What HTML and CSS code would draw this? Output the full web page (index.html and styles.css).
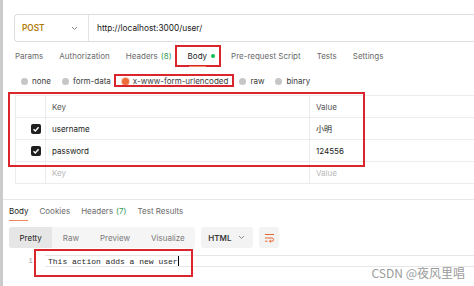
FILE: index.html
```html
<!DOCTYPE html>
<html lang="zh">
<head>
  <meta charset="UTF-8">
  <title>POST /user/</title>
  <link rel="stylesheet" href="styles.css">
</head>
<body>
  <div class="app">
    <div class="request">
      <div class="method">
        <span>POST</span>
        <svg width="7" height="5" viewBox="0 0 7 5"><path d="M1 1l2.5 2.5L6 1" fill="none" stroke="#8a8a8a" stroke-width="1"/></svg>
      </div>
      <div class="url">http://localhost:3000/user/</div>
    </div>

    <nav class="tabs req-tabs">
      <span class="tab">Params</span>
      <span class="tab">Authorization</span>
      <span class="tab">Headers <em>(8)</em></span>
      <span class="tab active mark-body">Body<i class="dot"></i></span>
      <span class="tab">Pre-request Script</span>
      <span class="tab">Tests</span>
      <span class="tab">Settings</span>
    </nav>

    <div class="body-types">
      <label class="radio"><i></i>none</label>
      <label class="radio"><i></i>form-data</label>
      <label class="radio checked mark-type"><i></i>x-www-form-urlencoded</label>
      <label class="radio"><i></i>raw</label>
      <label class="radio"><i></i>binary</label>
    </div>

    <div class="params-wrap">
      <table class="params">
        <tr class="head">
          <td class="check"></td>
          <td class="key">Key</td>
          <td>Value</td>
        </tr>
        <tr>
          <td class="check"><span class="box"><svg width="8" height="8" viewBox="0 0 8 8"><path d="M1.5 4.2l1.8 1.7L6.6 2.2" fill="none" stroke="#fff" stroke-width="1.4"/></svg></span></td>
          <td class="key">username</td>
          <td>小明</td>
        </tr>
        <tr>
          <td class="check"><span class="box"><svg width="8" height="8" viewBox="0 0 8 8"><path d="M1.5 4.2l1.8 1.7L6.6 2.2" fill="none" stroke="#fff" stroke-width="1.4"/></svg></span></td>
          <td class="key">password</td>
          <td>124556</td>
        </tr>
        <tr class="empty">
          <td class="check"></td>
          <td class="key">Key</td>
          <td>Value</td>
        </tr>
      </table>
      <div class="mark mark-table"></div>
    </div>

    <section class="response">
      <nav class="tabs res-tabs">
        <span class="tab active">Body</span>
        <span class="tab">Cookies</span>
        <span class="tab">Headers <em>(7)</em></span>
        <span class="tab">Test Results</span>
      </nav>

      <div class="toolbar">
        <div class="views">
          <span class="view active">Pretty</span>
          <span class="view">Raw</span>
          <span class="view">Preview</span>
          <span class="view">Visualize</span>
        </div>
        <div class="format">
          <span>HTML</span>
          <svg width="7" height="5" viewBox="0 0 7 5"><path d="M1 1l2.5 2.5L6 1" fill="none" stroke="#8a8a8a" stroke-width="1"/></svg>
        </div>
        <div class="wrap-btn">
          <svg width="11" height="10" viewBox="0 0 11 10"><path d="M1 1.5h9M1 5h7a1.6 1.6 0 0 1 0 3.2H5.5M6.8 7l-1.3 1.2 1.3 1.2M1 8.2h2.5" fill="none" stroke="#e8692e" stroke-width="1"/></svg>
        </div>
      </div>

      <div class="editor">
        <span class="ln">1</span>
        <div class="code-line"><code>This action adds a new user</code><span class="caret"></span></div>
        <div class="mark mark-code"></div>
      </div>
    </section>

    <div class="watermark">CSDN @夜风里唱</div>
  </div>
</body>
</html>
```

FILE: styles.css
```css
* {
  box-sizing: border-box;
}

body {
  margin: 0;
  background: #fff;
  font-family: Inter, "Noto Sans CJK SC", sans-serif;
  font-size: 8px;
  color: #212121;
  overflow: hidden;
}

.app {
  position: relative;
  height: 286px;
  border-left: 3px solid #cbcbcb;
  padding-top: 14px;
  overflow: hidden;
}

/* request bar */
.request {
  display: flex;
  align-items: center;
  height: 28px;
  margin-left: 11px;
  border: 1px solid #dedede;
  border-right: none;
  border-radius: 4px 0 0 4px;
}

.method {
  display: flex;
  align-items: center;
  justify-content: space-between;
  width: 74px;
  height: 100%;
  padding: 0 10px 0 7px;
  border-right: 1px solid #e4e4e4;
  color: #b07c0a;
  font-weight: 600;
  font-size: 8.3px;
}

.url {
  padding-left: 8px;
  font-size: 8.3px;
  color: #212121;
}

/* tabs */
.tabs {
  display: flex;
  align-items: center;
}

.tab {
  position: relative;
  display: flex;
  align-items: center;
  height: 100%;
  color: #6b6b6b;
}

.tab em {
  font-style: normal;
  color: #2f9a56;
  margin-left: 3px;
}

.tab.active {
  color: #212121;
}

.tab.active::after {
  content: "";
  position: absolute;
  left: 1px;
  bottom: 0;
  width: 17px;
  height: 1.5px;
  background: #f0875c;
}

.req-tabs {
  height: 22px;
  margin-top: 3px;
  padding-left: 12px;
  gap: 16px;
}

.dot {
  width: 4px;
  height: 4px;
  margin-left: 4px;
  border-radius: 50%;
  background: #0cbb52;
}

.mark-body::before,
.mark-type::before,
.mark {
  content: "";
  position: absolute;
  border: 2px solid #d9252b;
  pointer-events: none;
}

.mark-body::before {
  left: -13px;
  right: -6px;
  top: 0;
  bottom: 0;
}

/* body type radios */
.body-types {
  display: flex;
  align-items: center;
  height: 16px;
  margin-top: 6px;
  padding-left: 18px;
  gap: 11px;
}

.radio {
  position: relative;
  display: flex;
  align-items: center;
  gap: 4px;
  color: #3a3a3a;
}

.radio i {
  width: 7px;
  height: 7px;
  border-radius: 50%;
  background: #c6c6c6;
}

.radio.checked i {
  background: #ef6b38;
  box-shadow: 0 0 0 1px #f8c9b4;
}

.mark-type::before {
  left: -8px;
  right: -6px;
  top: -2px;
  bottom: -1px;
}

/* params table */
.params-wrap {
  position: relative;
  margin: 6px 0 0 12px;
}

.params {
  width: 480px;
  border-collapse: collapse;
}

.params td {
  height: 22px;
  padding: 0 6px;
  border: 1px solid #ececec;
  color: #212121;
}

.params .check {
  width: 30px;
  padding: 0 4px 0 0;
  text-align: right;
}

.params .key {
  width: 264px;
}

.params .head td {
  color: #555;
}

.params .empty td {
  color: #b8b8b8;
}

.box {
  display: inline-flex;
  align-items: center;
  justify-content: center;
  width: 10px;
  height: 10px;
  margin-top: 2px;
  border-radius: 2px;
  background: #1f1f1f;
}

.mark-table {
  left: -7px;
  top: -3px;
  width: 357px;
  height: 75px;
}

/* response */
.response {
  margin-top: 15px;
  border-top: 1px solid #e8e8e8;
}

.res-tabs {
  height: 21px;
  padding-left: 6px;
  gap: 11px;
}

.res-tabs .tab.active::after {
  left: 0;
  width: 19px;
}

.toolbar {
  display: flex;
  height: 21px;
  margin-top: 6px;
  padding-left: 6px;
  gap: 6px;
}

.views {
  display: flex;
  border-radius: 3px;
  background: #f5f5f5;
  overflow: hidden;
}

.view {
  display: flex;
  align-items: center;
  padding: 0 10.5px;
  color: #7a7a7a;
}

.view.active {
  background: #e6e6e6;
  color: #212121;
}

.format {
  display: flex;
  align-items: center;
  justify-content: space-between;
  width: 52px;
  padding: 0 8px 0 7px;
  border-radius: 3px;
  background: #f3f3f3;
  font-weight: 600;
  color: #3a3a3a;
}

.wrap-btn {
  display: flex;
  align-items: center;
  justify-content: center;
  width: 20px;
  border-radius: 3px;
  background: #f3f3f3;
}

.editor {
  position: relative;
  display: flex;
  align-items: center;
  margin-top: 7px;
}

.ln {
  width: 30px;
  text-align: right;
  color: #9a9a9a;
  font-family: "Liberation Mono", monospace;
  font-size: 7.8px;
}

.code-line {
  display: flex;
  align-items: center;
  flex: 1;
  height: 12px;
  margin-left: 12px;
  padding-left: 3px;
  border-top: 1px solid #e6e6e6;
  border-bottom: 1px solid #e6e6e6;
}

.code-line code {
  font-family: "Liberation Mono", monospace;
  font-size: 8px;
  color: #1f1f1f;
}

.caret {
  width: 1px;
  height: 10px;
  background: #000;
}

.mark-code {
  left: 31px;
  top: -6px;
  width: 159px;
  height: 28px;
}

.watermark {
  position: absolute;
  right: 9px;
  bottom: 5px;
  font-family: "Noto Sans CJK SC", sans-serif;
  font-size: 12px;
  color: #9b9b9b;
}
```
